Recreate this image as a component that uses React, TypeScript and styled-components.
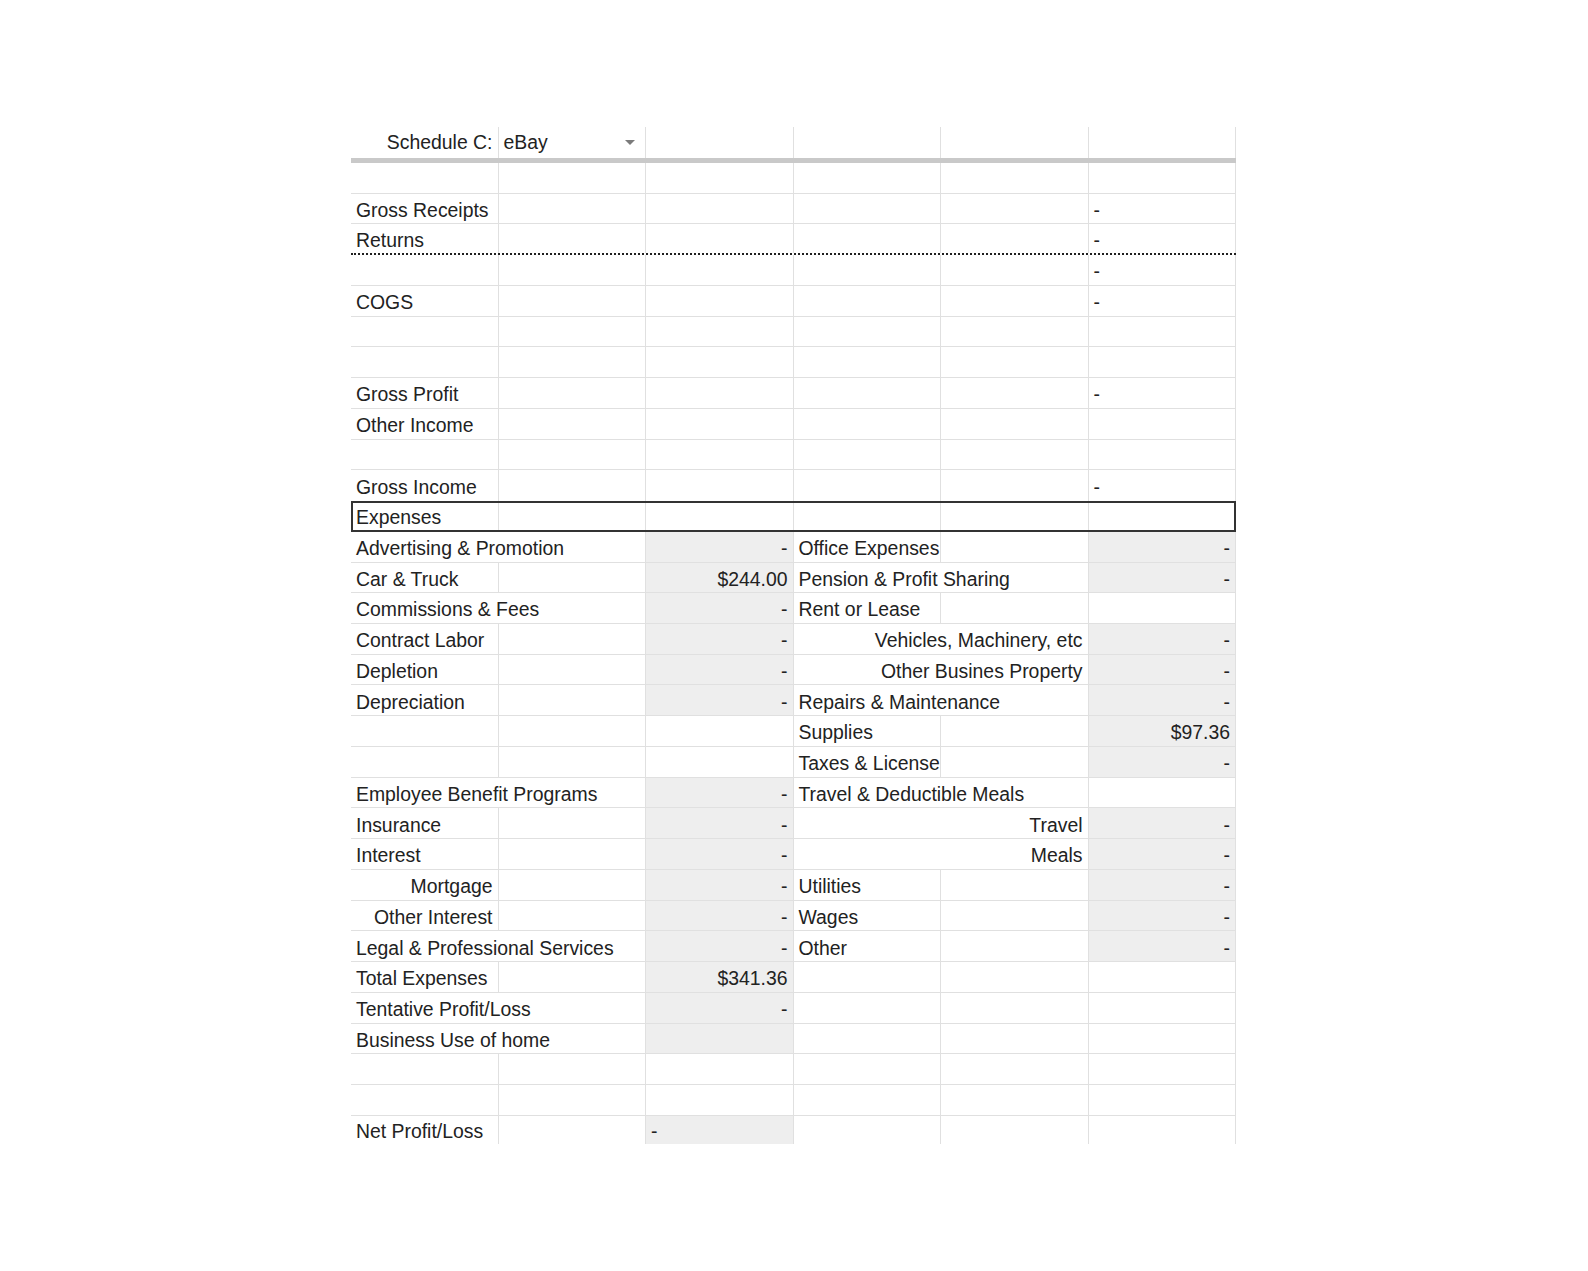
import React from 'react';
import styled, { createGlobalStyle } from 'styled-components';

const GlobalStyle = createGlobalStyle`
  html, body {
    margin: 0;
    padding: 0;
    background: #ffffff;
  }
  body {
    font-family: "Liberation Sans", Arial, sans-serif;
    color: #222222;
  }
`;

const GRID = '#e0e0e0';
const FILL = '#eeeeee';
const DARK = '#333333';
const COL_W = 147.5;
const ROW_H = 30.74;

type Kind = 'normal' | 'header' | 'dotted' | 'beforeBox' | 'boxed' | 'last';

type CellSpec = {
  t?: string;
  s?: number;
  r?: boolean;
  f?: boolean;
  dd?: boolean;
};

type RowSpec = {
  cells: CellSpec[];
  kind?: Kind;
};

const Page = styled.div`
  padding: 127px 0 0 351px;
`;

const Sheet = styled.div`
  width: ${COL_W * 6}px;
  display: flex;
  flex-direction: column;
`;

const Row = styled.div<{ $kind: Kind }>`
  box-sizing: border-box;
  display: grid;
  grid-template-columns: repeat(6, ${COL_W}px);
  height: ${(p) =>
    p.$kind === 'header' ? 36 : p.$kind === 'last' ? 28.5 : ROW_H}px;
  border-bottom: ${(p) =>
    p.$kind === 'header'
      ? '5px solid #c9c9c9'
      : p.$kind === 'dotted'
      ? '2px dotted #1f1f1f'
      : p.$kind === 'boxed'
      ? `2px solid ${DARK}`
      : 'none'};
  border-top: ${(p) => (p.$kind === 'boxed' ? `2px solid ${DARK}` : 'none')};
`;

const Cell = styled.div<{
  $span: number;
  $right: boolean;
  $fill: boolean;
  $kind: Kind;
  $first: boolean;
  $last: boolean;
}>`
  box-sizing: border-box;
  grid-column: span ${(p) => p.$span};
  min-width: 0;
  display: flex;
  align-items: center;
  justify-content: ${(p) => (p.$right ? 'flex-end' : 'flex-start')};
  gap: 8px;
  padding: ${(p) => (p.$kind === 'header' ? 0 : p.$kind === 'boxed' ? 2 : 4)}px 5px 0
    ${(p) => (p.$kind === 'boxed' && p.$first ? 3 : 5)}px;
  white-space: nowrap;
  font-size: 19.4px;
  line-height: 1;
  color: #222222;
  background: ${(p) => (p.$fill ? FILL : 'transparent')};
  border-right: ${(p) =>
    p.$kind === 'boxed' && p.$last ? `2px solid ${DARK}` : `1px solid ${GRID}`};
  border-left: ${(p) =>
    p.$kind === 'boxed' && p.$first ? `2px solid ${DARK}` : 'none'};
  border-bottom: ${(p) =>
    p.$kind === 'normal' ? `1px solid ${GRID}` : 'none'};
`;

const DropValue = styled.span`
  flex: 1;
`;

const Caret = styled.span`
  width: 0;
  height: 0;
  margin-right: 5px;
  border-left: 5px solid transparent;
  border-right: 5px solid transparent;
  border-top: 5px solid #7b7b7b;
`;

const E: CellSpec = {};
const D: CellSpec = { t: '-', r: true, f: true };
const blank: RowSpec = { cells: [E, E, E, E, E, E] };

const rows: RowSpec[] = [
  {
    kind: 'header',
    cells: [{ t: 'Schedule C:', r: true }, { t: 'eBay', dd: true }, E, E, E, E],
  },
  blank,
  { cells: [{ t: 'Gross Receipts' }, E, E, E, E, { t: '-' }] },
  { kind: 'dotted', cells: [{ t: 'Returns' }, E, E, E, E, { t: '-' }] },
  { cells: [E, E, E, E, E, { t: '-' }] },
  { cells: [{ t: 'COGS' }, E, E, E, E, { t: '-' }] },
  blank,
  blank,
  { cells: [{ t: 'Gross Profit' }, E, E, E, E, { t: '-' }] },
  { cells: [{ t: 'Other Income' }, E, E, E, E, E] },
  blank,
  { kind: 'beforeBox', cells: [{ t: 'Gross Income' }, E, E, E, E, { t: '-' }] },
  { kind: 'boxed', cells: [{ t: 'Expenses' }, E, E, E, E, E] },
  { cells: [{ t: 'Advertising & Promotion', s: 2 }, D, { t: 'Office Expenses' }, E, D] },
  { cells: [{ t: 'Car & Truck' }, E, { t: '$244.00', r: true, f: true }, { t: 'Pension & Profit Sharing', s: 2 }, D] },
  { cells: [{ t: 'Commissions & Fees', s: 2 }, D, { t: 'Rent or Lease' }, E, E] },
  { cells: [{ t: 'Contract Labor' }, E, D, { t: 'Vehicles, Machinery, etc', s: 2, r: true }, D] },
  { cells: [{ t: 'Depletion' }, E, D, { t: 'Other Busines Property', s: 2, r: true }, D] },
  { cells: [{ t: 'Depreciation' }, E, D, { t: 'Repairs & Maintenance', s: 2 }, D] },
  { cells: [E, E, E, { t: 'Supplies' }, E, { t: '$97.36', r: true, f: true }] },
  { cells: [E, E, E, { t: 'Taxes & License' }, E, D] },
  { cells: [{ t: 'Employee Benefit Programs', s: 2 }, D, { t: 'Travel & Deductible Meals', s: 2 }, E] },
  { cells: [{ t: 'Insurance' }, E, D, { t: 'Travel', s: 2, r: true }, D] },
  { cells: [{ t: 'Interest' }, E, D, { t: 'Meals', s: 2, r: true }, D] },
  { cells: [{ t: 'Mortgage', r: true }, E, D, { t: 'Utilities' }, E, D] },
  { cells: [{ t: 'Other Interest', r: true }, E, D, { t: 'Wages' }, E, D] },
  { cells: [{ t: 'Legal & Professional Services', s: 2 }, D, { t: 'Other' }, E, D] },
  { cells: [{ t: 'Total Expenses' }, E, { t: '$341.36', r: true, f: true }, E, E, E] },
  { cells: [{ t: 'Tentative Profit/Loss', s: 2 }, D, E, E, E] },
  { cells: [{ t: 'Business Use of home', s: 2 }, { f: true }, E, E, E] },
  blank,
  blank,
  { kind: 'last', cells: [{ t: 'Net Profit/Loss' }, E, { t: '-', f: true }, E, E, E] },
];

export default function App() {
  return (
    <Page>
      <GlobalStyle />
      <Sheet>
        {rows.map((row, ri) => {
          const kind: Kind = row.kind ?? 'normal';
          return (
            <Row key={ri} $kind={kind}>
              {row.cells.map((c, ci) => (
                <Cell
                  key={ci}
                  $span={c.s ?? 1}
                  $right={!!c.r}
                  $fill={!!c.f}
                  $kind={kind}
                  $first={ci === 0}
                  $last={ci === row.cells.length - 1}
                >
                  {c.dd ? (
                    <>
                      <DropValue>{c.t}</DropValue>
                      <Caret />
                    </>
                  ) : (
                    c.t
                  )}
                </Cell>
              ))}
            </Row>
          );
        })}
      </Sheet>
    </Page>
  );
}
